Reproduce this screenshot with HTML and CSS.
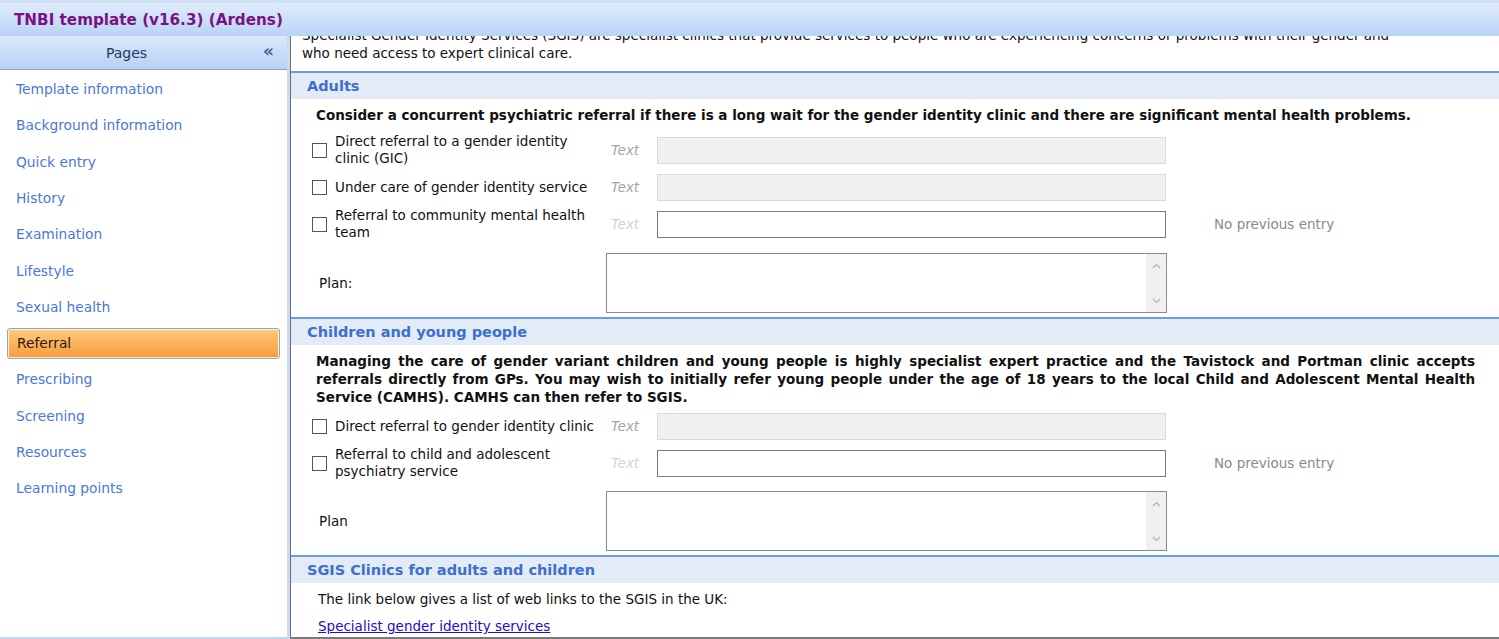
FILE: index.html
```html
<!doctype html>
<html lang="en">
<head>
    <meta charset="UTF-8">
    <title>TNBI template (v16.3) (Ardens)</title>
    <link rel="stylesheet" href="styles.css">
</head>
<body>
    <div class="titlebar">TNBI template (v16.3) (Ardens)</div>
    <div class="main">
        <div class="sidebar">
            <div class="pages-header">
                <span>Pages</span>
                <span class="collapse">&laquo;</span>
            </div>
            <ul class="nav">
                <li>Template information</li>
                <li>Background information</li>
                <li>Quick entry</li>
                <li>History</li>
                <li>Examination</li>
                <li>Lifestyle</li>
                <li>Sexual health</li>
                <li class="active">Referral</li>
                <li>Prescribing</li>
                <li>Screening</li>
                <li>Resources</li>
                <li>Learning points</li>
            </ul>
        </div>
        <div class="splitter"></div>
        <div class="content">
            <div class="scroller">
                <section class="intro">
                    <p>Specialist Gender Identity Services (SGIS) are specialist clinics that provide services to people who are experiencing concerns or problems with their gender and<br>who need access to expert clinical care.</p>
                </section>

                <section class="block">
                    <h2>Adults</h2>
                    <p class="lead">Consider a concurrent psychiatric referral if there is a long wait for the gender identity clinic and there are significant mental health problems.</p>
                    <div class="rows roomy">
                        <div class="row">
                            <label class="check"><span class="box"></span><span>Direct referral to a gender identity clinic (GIC)</span></label>
                            <span class="hint">Text</span>
                            <div class="field disabled"></div>
                            <span class="note"></span>
                        </div>
                        <div class="row">
                            <label class="check"><span class="box"></span><span>Under care of gender identity service</span></label>
                            <span class="hint">Text</span>
                            <div class="field disabled"></div>
                            <span class="note"></span>
                        </div>
                        <div class="row">
                            <label class="check"><span class="box"></span><span>Referral to community mental health team</span></label>
                            <span class="hint faint">Text</span>
                            <div class="field"></div>
                            <span class="note">No previous entry</span>
                        </div>
                    </div>
                    <div class="plan roomy">
                        <span>Plan:</span>
                        <div class="memo">
                            <div class="memo-scroll">
                                <svg width="9" height="6" viewBox="0 0 9 6"><polyline points="1,5 4.5,1.5 8,5" fill="none" stroke="#b3b3b3" stroke-width="1.2"/></svg>
                                <svg width="9" height="6" viewBox="0 0 9 6"><polyline points="1,1 4.5,4.5 8,1" fill="none" stroke="#b3b3b3" stroke-width="1.2"/></svg>
                            </div>
                        </div>
                    </div>
                </section>

                <section class="block">
                    <h2>Children and young people</h2>
                    <p class="lead justify">Managing the care of gender variant children and young people is highly specialist expert practice and the Tavistock and Portman clinic accepts referrals directly from GPs. You may wish to initially refer young people under the age of 18 years to the local Child and Adolescent Mental Health Service (CAMHS). CAMHS can then refer to SGIS.</p>
                    <div class="rows">
                        <div class="row">
                            <label class="check"><span class="box"></span><span>Direct referral to gender identity clinic</span></label>
                            <span class="hint">Text</span>
                            <div class="field disabled"></div>
                            <span class="note"></span>
                        </div>
                        <div class="row">
                            <label class="check"><span class="box"></span><span>Referral to child and adolescent psychiatry service</span></label>
                            <span class="hint faint">Text</span>
                            <div class="field"></div>
                            <span class="note">No previous entry</span>
                        </div>
                    </div>
                    <div class="plan">
                        <span>Plan</span>
                        <div class="memo">
                            <div class="memo-scroll">
                                <svg width="9" height="6" viewBox="0 0 9 6"><polyline points="1,5 4.5,1.5 8,5" fill="none" stroke="#b3b3b3" stroke-width="1.2"/></svg>
                                <svg width="9" height="6" viewBox="0 0 9 6"><polyline points="1,1 4.5,4.5 8,1" fill="none" stroke="#b3b3b3" stroke-width="1.2"/></svg>
                            </div>
                        </div>
                    </div>
                </section>

                <section class="block last">
                    <h2>SGIS Clinics for adults and children</h2>
                    <p class="plain first">The link below gives a list of web links to the SGIS in the UK:</p>
                    <p class="plain"><a href="#">Specialist gender identity services</a></p>
                </section>
            </div>
        </div>
    </div>
</body>
</html>
```

FILE: styles.css
```css
* {
    box-sizing: border-box;
}
body {
    margin: 0;
    height: 100vh;
    display: flex;
    flex-direction: column;
    font-family: "DejaVu Sans", Tahoma, sans-serif;
    font-size: 13.5px;
    color: #111;
    background: #fff;
    overflow: hidden;
}
.titlebar {
    height: 36px;
    flex: none;
    padding: 0 14px;
    display: flex;
    align-items: center;
    font-weight: bold;
    font-size: 15.2px;
    color: #7a1283;
    border-top: 3px solid #cfe0f7;
    background: linear-gradient(#e0ecfc, #b9d3f6);
}
.main {
    flex: 1;
    display: flex;
    min-height: 0;
}
.sidebar {
    width: 287px;
    flex: none;
    display: flex;
    flex-direction: column;
    border-bottom: 2px solid #c2d6f2;
}
.pages-header {
    height: 34px;
    display: flex;
    align-items: center;
    justify-content: center;
    padding-right: 34px;
    position: relative;
    color: #1f3a63;
    font-size: 14px;
    background: linear-gradient(#dbe8fb, #b7d1f5);
    border-bottom: 1px solid #7fa4d8;
}
.collapse {
    position: absolute;
    right: 13px;
    top: 5px;
    font-size: 17px;
    font-weight: bold;
    color: #3b5f94;
}
.nav {
    list-style: none;
    margin: 0;
    padding: 1px 0 0 7px;
    width: 280px;
}
.nav li {
    height: 36.3px;
    display: flex;
    align-items: center;
    padding-left: 9px;
    color: #4a78d9;
    font-size: 13.8px;
}
.nav li.active {
    height: 31px;
    margin: 2.6px 0;
    color: #2a1a0a;
    border: 1px solid #a3a3a3;
    border-radius: 3px;
    box-shadow: inset 0 0 0 1px #fff2dc;
    background: linear-gradient(#ffcb80, #f79a3c);
}
.splitter {
    width: 3px;
    flex: none;
    background: #c9dbf4;
}
.content {
    flex: 1;
    min-width: 0;
    overflow: hidden;
    border-left: 1px solid #6d6d6d;
    border-bottom: 2px solid #7a7a7a;
}
.scroller {
    margin-top: -10px;
}
section {
    border-bottom: 2px solid #6e9ce3;
}
section.last {
    border-bottom: none;
}
.intro p {
    margin: 0;
    padding: 0 30px 9px 11px;
    line-height: 18px;
}
h2 {
    margin: 0;
    height: 26px;
    display: flex;
    align-items: center;
    padding-left: 16px;
    font-size: 14.5px;
    color: #3d6fcf;
    background: #e3ebf7;
}
.lead {
    margin: 7px 0 0;
    padding: 0 24px 0 25px;
    font-weight: bold;
    line-height: 18px;
}
.justify {
    text-align: justify;
}
.rows {
    margin-top: 3px;
}
.rows.roomy {
    margin-top: 6px;
}
.row {
    display: grid;
    grid-template-columns: 294px 51px 509px 1fr;
    align-items: center;
    min-height: 34px;
    padding-left: 21px;
}
.check {
    display: flex;
    align-items: center;
    gap: 8px;
    line-height: 17px;
    padding: 3px 12px 3px 0;
}
.box {
    width: 15px;
    height: 15px;
    flex: none;
    border: 1px solid #555;
    background: #fff;
}
.hint {
    font-style: italic;
    color: #a5a5a5;
    padding-left: 5px;
}
.hint.faint {
    color: #d3d3d3;
}
.field {
    height: 27px;
    border: 1px solid #7a7a7a;
    background: #fff;
}
.field.disabled {
    border-color: #d9d9d9;
    background: #f0f0f0;
}
.note {
    padding-left: 48px;
    color: #8a8a8a;
}
.plan {
    display: grid;
    grid-template-columns: 287px 561px;
    align-items: center;
    padding: 8px 0 4px 28px;
}
.plan.roomy {
    padding-top: 9px;
}
.memo {
    height: 60px;
    border: 1px solid #8a8a8a;
    display: flex;
    justify-content: flex-end;
}
.memo-scroll {
    width: 20px;
    background: #f0f0f0;
    display: flex;
    flex-direction: column;
    justify-content: space-between;
    align-items: center;
    padding: 9px 0 8px;
}
.plain {
    margin: 0;
    padding-left: 27px;
    line-height: 27px;
}
.plain.first {
    margin-top: 3px;
}
a {
    color: #1a0dcc;
}
```
